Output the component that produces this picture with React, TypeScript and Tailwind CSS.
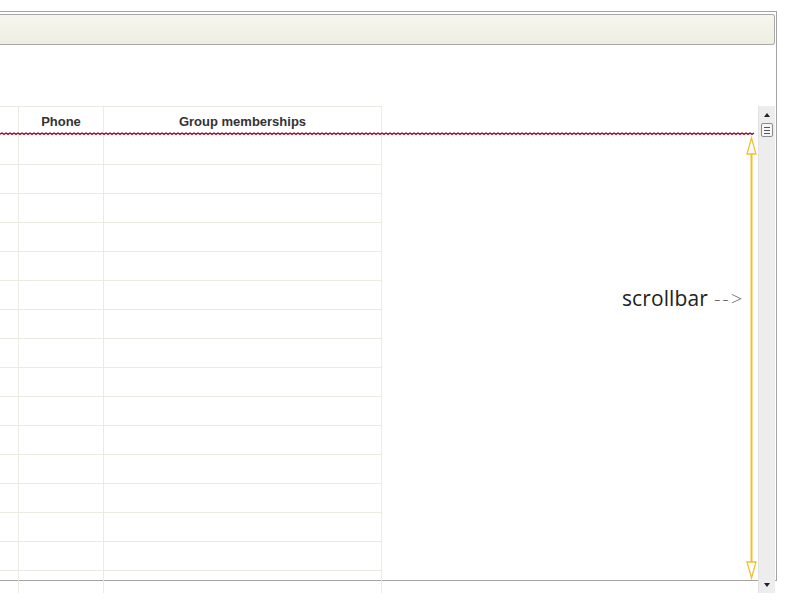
import React from "react"

const rows = Array.from({ length: 15 }, (_, i) => i)

// zigzag for the red "wavy" marker line
const wave = (() => {
  let d = "M0 2"
  for (let x = 2; x <= 754; x += 2) {
    d += ` L${x} ${x % 4 === 0 ? 2.4 : 1}`
  }
  return d
})()

const Scrollbar = () => (
  <div className="w-[17px] h-[487px] bg-[#ededed] border-l border-[#e2e2e2] flex flex-col items-center">
    <div className="h-[17px] w-full flex items-center justify-center">
      <div className="w-0 h-0 border-l-[3.5px] border-r-[3.5px] border-b-[4px] border-l-transparent border-r-transparent border-b-[#222] mt-[1px]" />
    </div>
    <div className="w-[12px] h-[14px] bg-[#f6f6f6] border border-[#8a8a8a] rounded-[2px] flex flex-col items-center justify-center gap-[2px]">
      <div className="w-[6px] h-px bg-[#555]" />
      <div className="w-[6px] h-px bg-[#555]" />
      <div className="w-[6px] h-px bg-[#555]" />
    </div>
    <div className="flex-1" />
    <div className="h-[17px] w-full flex items-center justify-center">
      <div className="w-0 h-0 border-l-[3.5px] border-r-[3.5px] border-t-[4px] border-l-transparent border-r-transparent border-t-[#222]" />
    </div>
  </div>
)

const Cells = () => (
  <>
    <div className="w-[19px] border-r border-[#ebebe4]" />
    <div className="w-[85px] border-r border-[#ebebe4]" />
    <div className="w-[278px] border-r border-[#ebebe4]" />
  </>
)

export default function App() {
  return (
    <div className="relative w-[787px] h-[604px] overflow-hidden bg-white font-['Liberation_Sans',Arial,sans-serif]">
      <div className="mt-[11px] w-[777px] h-[570px] border-t border-r border-b border-[#a3a3a3] pt-[2px]">
        <div className="h-[31px] mr-[1px] bg-gradient-to-b from-[#f6f6ef] to-[#eeeee1] border-t border-b border-r border-[#a9a9a9] rounded-r-[3px]" />

        <div className="mt-[61px] flex justify-between">
          <div className="w-[382px]">
            <div className="flex h-[30px] border-t border-[#ebebe4] text-[13px] font-bold text-[#333]">
              <div className="w-[19px] border-r border-[#ebebe4]" />
              <div className="w-[85px] border-r border-[#ebebe4] flex items-center justify-center">Phone</div>
              <div className="w-[278px] border-r border-[#ebebe4] flex items-center justify-center">Group memberships</div>
            </div>
            {rows.map((r) => (
              <div key={r} className="flex h-[29px] border-b border-[#ebebe4]">
                <Cells />
              </div>
            ))}
            <div className="flex h-[22px]">
              <Cells />
            </div>
          </div>
          <div className="mr-px">
            <Scrollbar />
          </div>
        </div>
      </div>

      {/* annotation: red marker under header */}
      <svg className="absolute left-0 top-[132px]" width="756" height="4">
        <path d={wave} fill="none" stroke="#9a0f2e" strokeWidth="1.4" />
      </svg>

      {/* annotation: yellow double arrow */}
      <svg className="absolute left-[744px] top-[136px]" width="15" height="446">
        <line x1="7.5" y1="18" x2="7.5" y2="426" stroke="#f0c030" strokeWidth="2" />
        <polygon points="7.5,2 3,18 12,18" fill="white" stroke="#f0c030" strokeWidth="1.3" />
        <polygon points="7.5,442 3,426 12,426" fill="white" stroke="#f0c030" strokeWidth="1.3" />
      </svg>

      <div className="absolute left-[622px] top-[283px] flex items-baseline gap-[6px] font-['Open_Sans',sans-serif]">
        <span className="text-[21px] text-[#222] tracking-[0.1px]">scrollbar</span>
        <span className="text-[20px] text-[#666] font-light tracking-[2px]">--&gt;</span>
      </div>
    </div>
  )
}
